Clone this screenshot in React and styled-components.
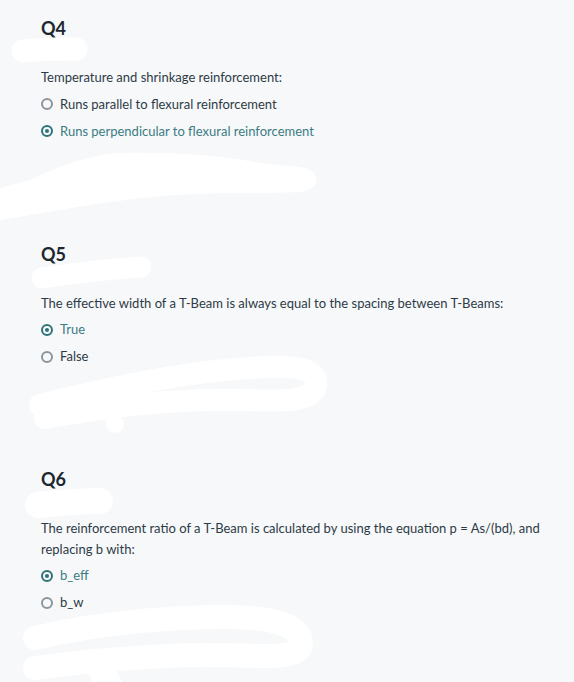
import React from "react";
import styled, { createGlobalStyle } from "styled-components";

const questions = [
  {
    id: "Q4",
    text: "Temperature and shrinkage reinforcement:",
    options: [
      { label: "Runs parallel to flexural reinforcement", picked: false },
      { label: "Runs perpendicular to flexural reinforcement", picked: true },
    ],
  },
  {
    id: "Q5",
    text: "The effective width of a T-Beam is always equal to the spacing between T-Beams:",
    options: [
      { label: "True", picked: true },
      { label: "False", picked: false },
    ],
  },
  {
    id: "Q6",
    text: "The reinforcement ratio of a T-Beam is calculated by using the equation p = As/(bd), and replacing b with:",
    options: [
      { label: "b_eff", picked: true },
      { label: "b_w", picked: false },
    ],
  },
];

const App = () => {
  return (
    <>
      <GlobalStyle />
      <Page>
        {questions.map((q) => (
          <Section key={q.id}>
            <Heading>{q.id}</Heading>
            <Prompt>{q.text}</Prompt>
            <Options>
              {q.options.map((o) => (
                <Option key={o.label} $picked={o.picked}>
                  <Radio $picked={o.picked} />
                  {o.label}
                </Option>
              ))}
            </Options>
          </Section>
        ))}
        {/* white marker scribbles drawn over the page */}
        <Scribbles viewBox="0 0 574 682">
          <g fill="none" stroke="#fff" strokeLinecap="round" strokeLinejoin="round">
            <path d="M23 51 C40 49 60 49 76 49" strokeWidth="23" />
            <path d="M42 278 C75 273 110 269 141 267" strokeWidth="21" />
            <path d="M40 405 C100 390 180 372 250 368 C300 364 318 370 316 385 C314 400 290 402 250 400 C180 398 120 405 45 418" strokeWidth="22" />
            <path d="M38 505 C60 503 80 501 100 501" strokeWidth="26" />
            <path d="M35 638 C90 625 160 617 230 617 C290 618 305 632 300 648 C290 660 260 655 200 655 C140 656 80 662 35 668" strokeWidth="24" />
            <path d="M100 668 L112 690" strokeWidth="26" />
          </g>
          <circle cx="115" cy="424" r="9" fill="#fff" />
          <path
            d="M0 188 L30 180 C60 165 90 155 120 153 C170 152 220 155 260 163 L300 167 C322 170 322 190 300 192 C260 194 220 192 160 196 C100 202 50 212 0 220 Z"
            fill="#fff"
          />
        </Scribbles>
      </Page>
    </>
  );
};

export default App;

const GlobalStyle = createGlobalStyle`
  body {
    margin: 0;
    background: #f7f8fa;
  }
`;
const Page = styled.div`
  position: relative;
  width: 574px;
  height: 682px;
  overflow: hidden;
  box-sizing: border-box;
  padding: 18px 10px 0 41px;
  background: #f7f8fa;
  font-family: Lato, "Open Sans", sans-serif;
  color: #2d3b45;
`;
const Section = styled.section`
  padding-bottom: 102px;
`;
const Heading = styled.h2`
  margin: 0 0 29px;
  font-size: 18px;
  line-height: 20px;
  font-weight: 700;
  color: #1d2730;
`;
const Prompt = styled.p`
  margin: 0 0 6px;
  font-size: 13px;
  line-height: 20.5px;
`;
const Options = styled.div`
  display: flex;
  flex-direction: column;
  gap: 6px;
`;
const Option = styled.div`
  display: flex;
  align-items: center;
  gap: 7px;
  font-size: 13px;
  line-height: 21px;
  color: ${(p) => (p.$picked ? "#3b7c83" : "#2d3b45")};
`;
const Radio = styled.span`
  position: relative;
  flex: none;
  width: 12px;
  height: 12px;
  box-sizing: border-box;
  border-radius: 50%;
  border: 2px solid ${(p) => (p.$picked ? "#2f7379" : "#8c959c")};

  &::after {
    content: "";
    display: ${(p) => (p.$picked ? "block" : "none")};
    position: absolute;
    left: 2px;
    top: 2px;
    width: 4px;
    height: 4px;
    border-radius: 50%;
    background: #2f7379;
  }
`;
const Scribbles = styled.svg`
  position: absolute;
  left: 0;
  top: 0;
  width: 574px;
  height: 682px;
  pointer-events: none;
`;
